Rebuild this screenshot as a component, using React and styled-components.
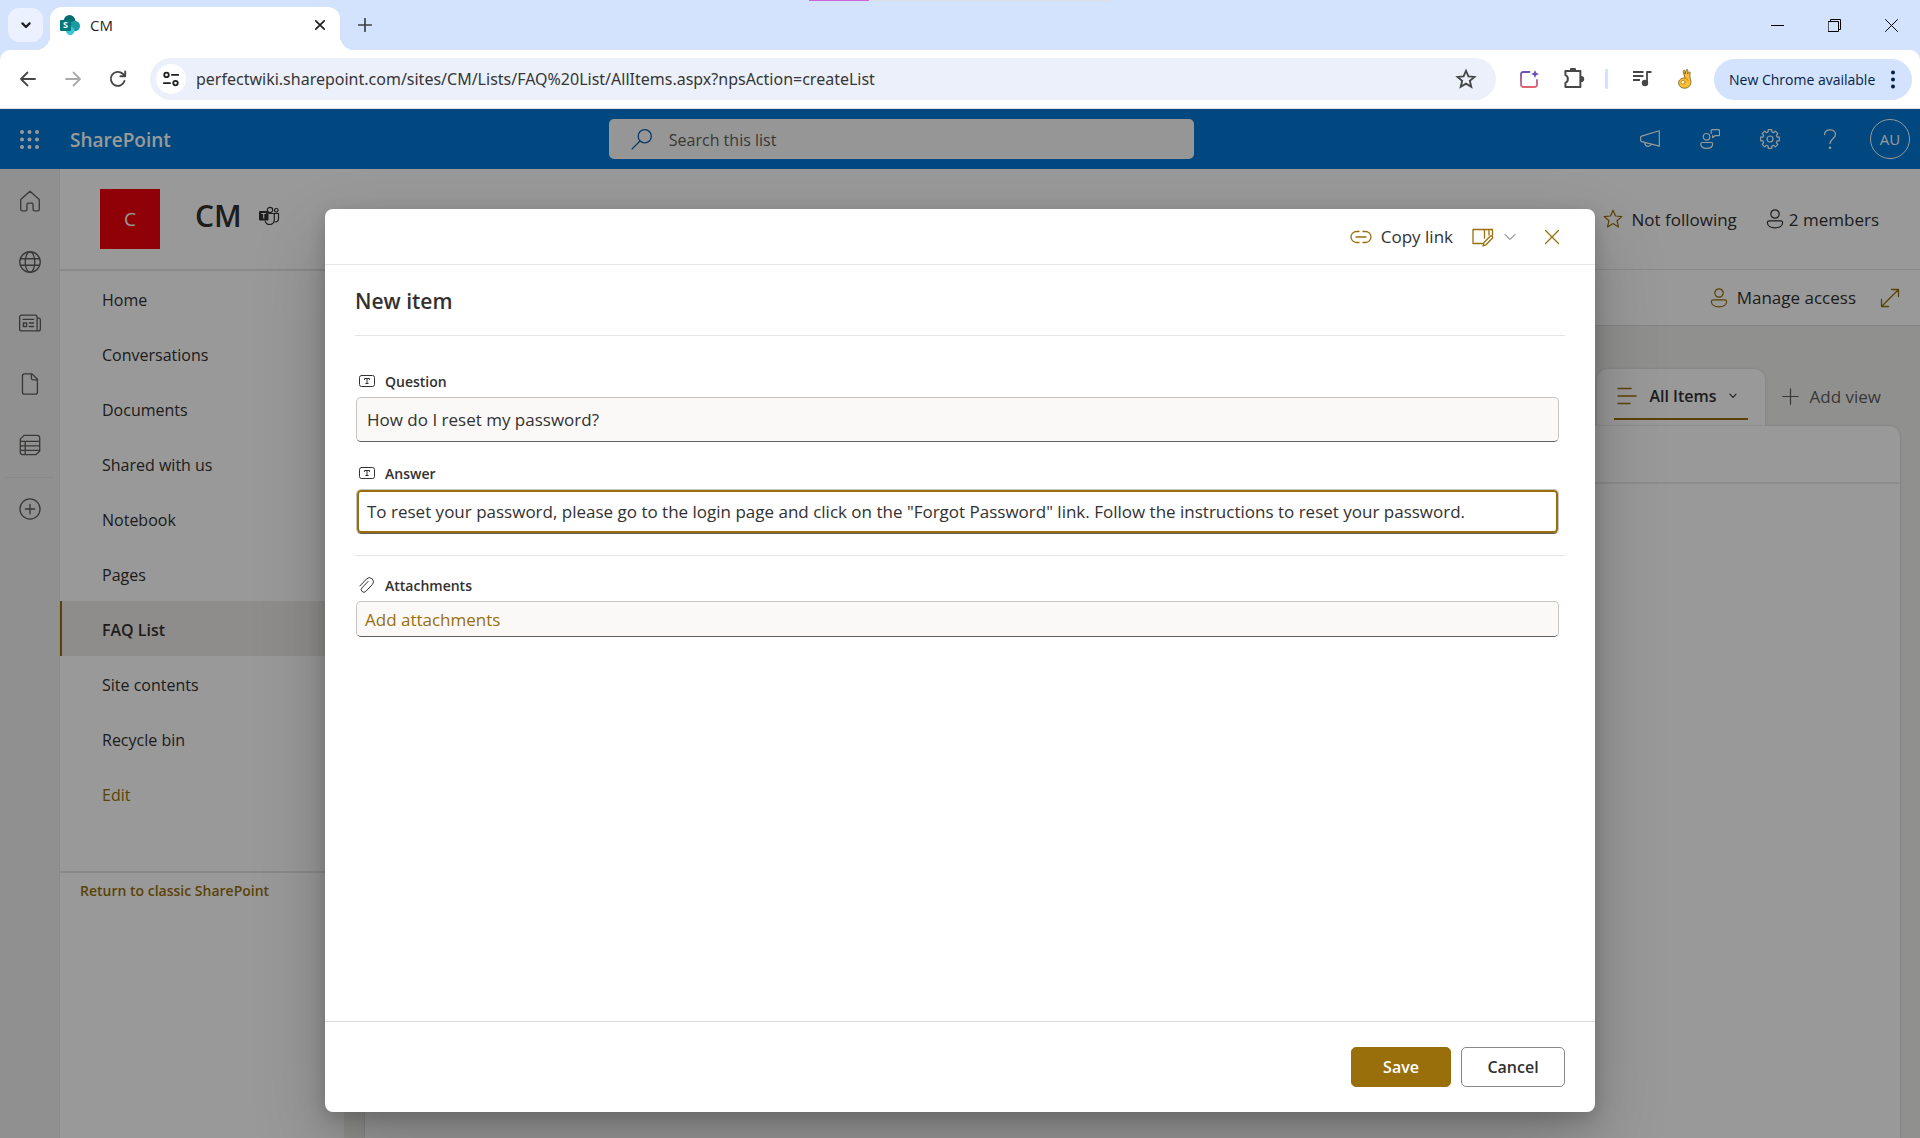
import React, { useState } from "react";
import styled, { createGlobalStyle, css } from "styled-components";

const GOLD = "#986f0b";

const GlobalStyle = createGlobalStyle`
  * {
    box-sizing: border-box;
  }
  body {
    margin: 0;
    font-family: "Open Sans", "Noto Sans", sans-serif;
    font-size: 16px;
    color: #323130;
  }
  button, input {
    font: inherit;
    color: inherit;
  }
  button {
    padding: 0;
    border: 0;
    background: none;
    cursor: pointer;
  }
  a {
    color: inherit;
    text-decoration: none;
  }
`;

const Screen = styled.div`
  display: flex;
  flex-direction: column;
  min-height: 100vh;
`;

const Svg = styled.svg`
  display: block;
  flex: none;
  fill: none;
  stroke: currentColor;
  stroke-width: ${({ $weight }) => $weight || 1.3};
  stroke-linecap: round;
  stroke-linejoin: round;
`;

const Icon = ({ size = 20, width, height, weight, box, children }) => (
  <Svg
    width={width || size}
    height={height || size}
    viewBox={box || "0 0 20 20"}
    $weight={weight}
    aria-hidden="true"
  >
    {children}
  </Svg>
);

/* ---------- browser window ---------- */

const TabStrip = styled.div`
  position: relative;
  display: flex;
  align-items: center;
  height: 50px;
  padding-left: 8px;
  background: #d3e2fd;
`;

const LoadingLine = styled.div`
  position: absolute;
  top: 0;
  left: 809px;
  width: 301px;
  height: 1px;
  background: linear-gradient(to right, #cf63d8 60px, #dfdfe3 60px);
`;

const TabMenu = styled.button`
  display: flex;
  align-items: center;
  justify-content: center;
  width: 35px;
  height: 34px;
  margin-right: 7px;
  border-radius: 11px;
  background: #ebf1fe;
  color: #1f1f1f;
`;

const BrowserTab = styled.div`
  position: relative;
  display: flex;
  align-items: center;
  align-self: flex-end;
  gap: 10px;
  width: 290px;
  height: 43px;
  padding: 0 13px 7px 10px;
  border-radius: 12px 12px 0 0;
  background: #fff;
  font-size: 15px;
  color: #1f1f1f;

  &::before,
  &::after {
    content: "";
    position: absolute;
    bottom: 0;
    width: 14px;
    height: 14px;
  }
  &::before {
    left: -14px;
    background: radial-gradient(circle at 0 0, transparent 14px, #fff 14px);
  }
  &::after {
    right: -14px;
    background: radial-gradient(circle at 100% 0, transparent 14px, #fff 14px);
  }
`;

const TabName = styled.span`
  flex: 1;
`;

const NewTab = styled.button`
  margin-left: 18px;
  color: #3c4043;
`;

const WindowButtons = styled.div`
  display: flex;
  margin-left: auto;
`;

const WindowButton = styled.button`
  display: flex;
  align-items: center;
  justify-content: center;
  width: 57px;
  height: 50px;
  color: #000;
`;

const ToolbarBack = styled.div`
  background: #d3e2fd;
  border-bottom: 1px solid #dcdfe3;
`;

const Toolbar = styled.div`
  display: flex;
  align-items: center;
  height: 58px;
  padding: 0 8px 0 18px;
  border-radius: 10px 10px 0 0;
  background: #fff;
  color: #474747;
`;

const NavButtons = styled.div`
  display: flex;
  gap: 25px;
  margin-right: 22px;
`;

const ToolButton = styled.button`
  color: ${({ disabled }) => (disabled ? "#ababab" : "#474747")};
`;

const AddressBar = styled.div`
  display: flex;
  flex: 1;
  align-items: center;
  gap: 10px;
  height: 42px;
  padding: 0 19px 0 6px;
  border-radius: 21px;
  background: #ebf0fa;
`;

const SiteInfo = styled.button`
  display: flex;
  align-items: center;
  justify-content: center;
  width: 30px;
  height: 30px;
  border-radius: 50%;
  background: #fff;
  color: #1f1f1f;
`;

const Address = styled.input`
  flex: 1;
  padding: 0;
  border: 0;
  outline: 0;
  background: none;
  font-family: "Noto Sans", "Open Sans", sans-serif;
  color: #363636;
`;

const Extensions = styled.div`
  display: flex;
  align-items: center;
  gap: 24px;
  margin: 0 22px 0 23px;
`;

const Separator = styled.span`
  width: 3px;
  height: 20px;
  margin-left: -4px;
  border-radius: 1px;
  background: #d3e2fd;
`;

const UpdateButton = styled.button`
  display: flex;
  align-items: center;
  justify-content: space-between;
  width: 198px;
  height: 41px;
  padding: 0 16px 0 15px;
  border-radius: 21px;
  background: #d3e2fd;
  font-size: 14px;
  color: #041e49;
`;

/* ---------- SharePoint page ---------- */

const Page = styled.div`
  position: relative;
  display: flex;
  flex: 1;
  flex-direction: column;
`;

const SuiteBar = styled.header`
  display: grid;
  grid-template-columns: 14fr 585px 17fr;
  align-items: center;
  height: 60px;
  padding: 0 10px 0 19px;
  background: #0078d4;
  color: #fff;
`;

const Brand = styled.div`
  display: flex;
  align-items: center;
  gap: 30px;
`;

const BrandName = styled.a`
  padding-top: 2px;
  font-size: 19px;
  font-weight: 600;
`;

const SearchBox = styled.label`
  display: flex;
  align-items: center;
  gap: 16px;
  height: 40px;
  padding: 0 22px;
  border-radius: 5px;
  background: #fafafa;
  color: #0f5ea8;
`;

const SearchInput = styled.input`
  flex: 1;
  padding: 2px 0 0;
  border: 0;
  outline: 0;
  background: none;

  &::placeholder {
    color: #605e5c;
    opacity: 1;
  }
`;

const SuiteActions = styled.div`
  display: flex;
  align-items: center;
  justify-content: flex-end;
  gap: 40px;
`;

const Avatar = styled.button`
  width: 40px;
  height: 40px;
  margin-left: -10px;
  border: 1px solid #fff;
  border-radius: 50%;
  font-size: 15px;
`;

const Body = styled.div`
  display: flex;
  flex: 1;
`;

const Rail = styled.nav`
  display: flex;
  flex-direction: column;
  align-items: center;
  width: 60px;
  padding-top: 20px;
  border-right: 1px solid #e8e8e8;
  background: #f0f0f0;
  color: #605e5c;
`;

const RailLink = styled.a`
  padding: 0 0 37px;

  &:last-child {
    padding-top: 19px;
  }
`;

const RailDivider = styled.hr`
  width: 49px;
  margin: -17px 0 0;
  border: 0;
  border-top: 1px solid #e4e4e4;
`;

const Site = styled.div`
  display: flex;
  flex: 1;
  flex-direction: column;
  background: #fff;
`;

const SiteHeader = styled.div`
  display: flex;
  align-items: center;
  height: 101px;
  padding: 0 41px 0 40px;
  border-bottom: 1px solid #e6e6e6;
`;

const SiteLogo = styled.a`
  display: flex;
  align-items: center;
  justify-content: center;
  width: 60px;
  height: 60px;
  margin-right: 35px;
  background: #ee000c;
  font-size: 19px;
  color: #fff;
`;

const SiteTitle = styled.div`
  display: flex;
  align-items: center;
  gap: 16px;
  padding-bottom: 7px;
`;

const SiteName = styled.h1`
  margin: 0;
  font-size: 30px;
  font-weight: 600;
  line-height: 40px;
`;

const SiteMeta = styled.div`
  display: flex;
  align-items: center;
  gap: 28px;
  margin-left: auto;
`;

const MetaButton = styled.button`
  display: flex;
  align-items: center;
  gap: ${({ $gap }) => $gap}px;
  font-size: 17px;
`;

const Gold = styled.span`
  display: flex;
  color: ${GOLD};
`;

const Columns = styled.div`
  display: flex;
  flex: 1;
`;

const SideNav = styled.nav`
  width: 284px;
  border-top: 1px solid #e6e6e6;
`;

const NavList = styled.ul`
  margin: 0;
  padding: 0 0 50px;
  border-bottom: 2px solid #e4e4e4;
  list-style: none;
`;

const NavLink = styled.a`
  display: flex;
  align-items: center;
  height: 55px;
  padding: 2px 0 0 42px;
  ${({ $edit }) => $edit && css`color: ${GOLD};`}
  ${({ $selected }) =>
    $selected &&
    css`
      padding-left: 40px;
      border-left: 2px solid ${GOLD};
      background: #edebe9;
      font-weight: 600;
    `}
`;

const ClassicLink = styled.a`
  display: block;
  padding: 8px 20px;
  font-size: 14px;
  font-weight: 600;
  line-height: 20px;
  color: ${GOLD};
`;

const Content = styled.main`
  display: flex;
  flex: 1;
  flex-direction: column;
  background: #f1f0ef;
`;

const CommandBar = styled.div`
  display: flex;
  align-items: center;
  justify-content: flex-end;
  gap: 24px;
  height: 56px;
  padding: 0 20px 0 0;
  border-bottom: 1px solid #dcdcdc;
  background: #fff;
`;

const Views = styled.div`
  display: flex;
  justify-content: flex-end;
  height: 100px;
  padding: 43px 39px 0 0;
`;

const ViewTab = styled.button`
  display: flex;
  align-items: center;
  height: 57px;
  padding: 0 17px;
  border-radius: 10px 10px 0 0;
  background: #fff;
  box-shadow: 0 0 3px rgba(0, 0, 0, 0.12);
`;

const ViewTabInner = styled.span`
  display: flex;
  align-items: center;
  gap: 12px;
  height: 45px;
  padding: 0 11px 2px 3px;
  border-bottom: 2px solid ${GOLD};
  font-weight: 600;
`;

const AddView = styled.button`
  display: flex;
  align-items: center;
  gap: 11px;
  height: 54px;
  padding-left: 17px;
  font-size: 17px;
  color: #605e5c;
`;

const ListCard = styled.div`
  flex: 1;
  margin: 0 20px 0 21px;
  border-radius: 10px 10px 0 0;
  background: #fff;
  box-shadow: 0 0 3px rgba(0, 0, 0, 0.16);
`;

const ListHead = styled.div`
  height: 58px;
  border-bottom: 2px solid #edebe9;
`;

/* ---------- new item dialog ---------- */

const Overlay = styled.div`
  position: absolute;
  inset: 0;
  display: flex;
  padding: 100px 325px 26px;
  background: rgba(0, 0, 0, 0.4);
`;

const Dialog = styled.form`
  display: flex;
  flex: 1;
  flex-direction: column;
  border-radius: 8px;
  background: #fff;
  box-shadow: 0 32px 72px rgba(0, 0, 0, 0.22), 0 6px 18px rgba(0, 0, 0, 0.18);
`;

const DialogBar = styled.div`
  display: flex;
  align-items: center;
  justify-content: flex-end;
  height: 56px;
  padding: 0 35px 0 0;
  border-bottom: 1px solid #e6e6e6;
`;

const BarButton = styled.button`
  display: flex;
  align-items: center;
  gap: 9px;
  margin-left: ${({ $space }) => $space}px;
  font-size: 17px;
`;

const DialogBody = styled.div`
  flex: 1;
  padding: 0 30px;
`;

const DialogTitle = styled.h2`
  margin: 0 0 35px;
  padding: 20px 0 18px;
  border-bottom: 1px solid #e6e6e6;
  font-size: 21px;
  font-weight: 600;
  line-height: 32px;
`;

const Field = styled.div`
  margin-bottom: 21px;
  padding: 0 6px 0 1px;
`;

const FieldLabel = styled.label`
  display: flex;
  align-items: center;
  gap: 8px;
  height: 20px;
  margin-bottom: 6px;
  padding-left: 1px;
  font-size: 14px;
  font-weight: 600;
`;

const fieldFrame = css`
  display: block;
  width: 100%;
  border: 1px solid #c8c6c4;
  border-bottom-color: #605e5c;
  border-radius: 5px;
  background: #faf9f8;
  font-size: 17px;
`;

const TextField = styled.input`
  ${fieldFrame}
  height: 45px;
  padding: 0 10px;
  outline: 0;
  ${({ $active }) =>
    $active &&
    css`
      background: #fff;
      box-shadow: inset 0 0 0 2px ${GOLD};
    `}
`;

const AttachSection = styled.div`
  padding-top: 19px;
  border-top: 1px solid #e6e6e6;
`;

const AttachButton = styled.button`
  ${fieldFrame}
  height: 36px;
  padding: 0 8px;
  text-align: left;
  color: ${GOLD};
`;

const DialogFooter = styled.div`
  display: flex;
  justify-content: flex-end;
  gap: 10px;
  padding: 25px 30px;
  border-top: 1px solid #dcdcdc;
`;

const FooterButton = styled.button`
  width: ${({ $primary }) => ($primary ? 100 : 104)}px;
  height: 40px;
  border: 1px solid ${({ $primary }) => ($primary ? GOLD : "#8a8886")};
  border-radius: 5px;
  background: ${({ $primary }) => ($primary ? GOLD : "#fff")};
  font-weight: 600;
  color: ${({ $primary }) => ($primary ? "#fff" : "#323130")};
`;

/* ---------- icons ---------- */

const PersonIcon = () => (
  <Icon weight={1.2}>
    <circle cx="10" cy="5" r="4.2" />
    <path d="M4.2 11.8h11.6c1 0 1.8.8 1.8 1.7 0 3.4-3.4 5.3-7.6 5.3s-7.6-1.9-7.6-5.3c0-.9.8-1.7 1.8-1.7z" />
  </Icon>
);

const TextIcon = () => (
  <Icon weight={1}>
    <rect x="2.5" y="4.5" width="15" height="11" rx="2" />
    <path d="M7.5 8.5v-1h5v1M10 7.5v5M8.8 12.5h2.4" />
  </Icon>
);

// eight teeth around the hub, each one out and back in
const gearPath = () => {
  const points = [];
  for (let i = 0; i < 8; i++) {
    const middle = (i * Math.PI) / 4;
    [[-0.25, 7.4], [-0.19, 9.5], [0.19, 9.5], [0.25, 7.4]].forEach(([turn, r]) => {
      const x = 10 + r * Math.sin(middle + turn);
      const y = 10 - r * Math.cos(middle + turn);
      points.push(`${x.toFixed(2)} ${y.toFixed(2)}`);
    });
  }
  return `M${points.join("L")}z`;
};

const railIcons = [
  <path key="home" d="M1.500 8.700 10 1l8.500 7.700v8.800c0 .9-.6 1.500-1.500 1.500h-2.800c-.8 0-1.400-.6-1.400-1.400v-4.500c0-.7-.5-1.200-1.200-1.200H8.400c-.7 0-1.200.5-1.200 1.200v4.500c0 .8-.6 1.400-1.400 1.400H3c-.9 0-1.500-.6-1.500-1.500z" />,
  <g key="globe">
    <circle cx="10" cy="10" r="9.400" />
    <ellipse cx="10" cy="10" rx="4.400" ry="9.400" />
    <path d="M1.300 7h17.400M1.300 13h17.400" />
  </g>,
  <g key="news">
    <path d="M16.500 16.500V4.500c0-1-.7-1.700-1.700-1.700H2.200C1.200 2.800.5 3.500.5 4.500v11c0 1 .8 1.800 1.800 1.800h15.200c1.200 0 2-.8 2-2V7c0-.8-.7-1.400-1.500-1.400h-1.200" />
    <path d="M3.700 6.700h9.600M9.300 10h4M9.300 13.200h4M3.900 10h3v3.200h-3z" />
  </g>,
  <path key="file" d="M5 .7h6.800l5 5v11.600c0 1.100-.8 2-1.900 2H5c-1.100 0-1.900-.9-1.900-2V2.700c0-1.100.8-2 1.900-2zM11.300 1v3.700c0 .9.700 1.600 1.600 1.600h3.700" />,
  <path key="list" d="M4.500 1.200h12c1.400 0 2.400 1 2.400 2.300v12l-3.400 3.400H3.400c-1.300 0-2.300-1-2.300-2.300V4.600zM1.100 6.700h17.800M1.100 10.800h17.800M1.100 14.900h17.800M5.600 6.700v12.200" />,
  <g key="add">
    <circle cx="10" cy="10" r="9.200" />
    <path d="M10 5.700v8.600M5.700 10h8.600" />
  </g>,
];
const railNames = ["Home", "My sites", "My news", "My files", "My lists", "Create"];

const navItems = [
  "Home",
  "Conversations",
  "Documents",
  "Shared with us",
  "Notebook",
  "Pages",
  "FAQ List",
  "Site contents",
  "Recycle bin",
  "Edit",
];

const Browser = () => (
  <>
    <TabStrip>
      <LoadingLine />
      <TabMenu aria-label="Search tabs">
        <Icon size={16} weight={2.8}>
          <path d="m5.500 8 4.500 4.500L14.500 8" />
        </Icon>
      </TabMenu>
      <BrowserTab>
        <svg width="20" height="20" viewBox="0 0 20 20" aria-hidden="true">
          <circle cx="9.500" cy="5.800" r="5.800" fill="#036c70" />
          <circle cx="14.700" cy="11" r="5.300" fill="#1a9ba1" />
          <circle cx="10.200" cy="15.800" r="4.200" fill="#37c6d0" />
          <rect y="5" width="11" height="11" rx="1" fill="#03787c" />
          <text x="5.500" y="13.400" textAnchor="middle" fontSize="9" fontWeight="700" fill="#fff">
            S
          </text>
        </svg>
        <TabName>CM</TabName>
        <ToolButton aria-label="Close tab">
          <Icon size={14} weight={2.4}>
            <path d="m4 4 12 12M16 4 4 16" stroke="#1f1f1f" />
          </Icon>
        </ToolButton>
      </BrowserTab>
      <NewTab aria-label="New tab">
        <Icon size={14} weight={2.4}>
          <path d="M10 1v18M1 10h18" />
        </Icon>
      </NewTab>
      <WindowButtons>
        <WindowButton aria-label="Minimize">
          <Icon size={13} box="0 0 13 13" weight={1}>
            <path d="M0 6.500h13" />
          </Icon>
        </WindowButton>
        <WindowButton aria-label="Restore">
          <Icon size={13} box="0 0 13 13" weight={1}>
            <path d="M.5 2.500h10v10H.5zM2.500 2.500v-2h10v10h-2" />
          </Icon>
        </WindowButton>
        <WindowButton aria-label="Close">
          <Icon size={13} box="0 0 13 13" weight={1}>
            <path d="m.5.5 12 12M12.500.5l-12 12" />
          </Icon>
        </WindowButton>
      </WindowButtons>
    </TabStrip>
    <ToolbarBack>
      <Toolbar>
        <NavButtons>
          <ToolButton aria-label="Back">
            <Icon weight={1.8}>
              <path d="M17 10H3M9.500 3.500 3 10l6.500 6.500" />
            </Icon>
          </ToolButton>
          <ToolButton aria-label="Forward" disabled>
            <Icon weight={1.8}>
              <path d="M3 10h14M10.500 3.500 17 10l-6.500 6.500" />
            </Icon>
          </ToolButton>
          <ToolButton aria-label="Reload">
            <Icon weight={1.9}>
              <path d="M16.500 12a7 7 0 1 1-1.800-7.200L17 7M17.200 2.500V7.300h-4.800" />
            </Icon>
          </ToolButton>
        </NavButtons>
        <AddressBar>
          <SiteInfo aria-label="Site information">
            <Icon size={18} weight={2}>
              <circle cx="5" cy="5.500" r="2.500" />
              <path d="M11 5.500h7M2 14.500h7" />
              <circle cx="15" cy="14.500" r="2.500" />
            </Icon>
          </SiteInfo>
          <Address
            aria-label="Address"
            defaultValue="perfectwiki.sharepoint.com/sites/CM/Lists/FAQ%20List/AllItems.aspx?npsAction=createList"
          />
          <ToolButton aria-label="Bookmark">
            <Icon size={22} weight={1.7}>
              <path d="m10 2.500 2.200 5.100 5.500.5-4.200 3.600 1.300 5.400-4.800-2.900-4.800 2.900 1.300-5.400-4.200-3.600 5.500-.5z" strokeLinejoin="miter" />
            </Icon>
          </ToolButton>
        </AddressBar>
        <Extensions>
          <ToolButton aria-label="Screen capture">
            <Icon weight={1.8}>
              <defs>
                <linearGradient id="capture" x1="0" y1="0" x2="0" y2="1">
                  <stop offset="0" stopColor="#6a51b8" />
                  <stop offset="1" stopColor="#e0656f" />
                </linearGradient>
              </defs>
              <path d="M10.500 3H4.500A2.500 2.500 0 0 0 2 5.500v10A2.500 2.500 0 0 0 4.500 18h11a2.500 2.500 0 0 0 2.500-2.500V11" stroke="url(#capture)" />
              <path d="m16 1 1.200 2.800L20 5l-2.800 1.200L16 9l-1.200-2.800L12 5l2.800-1.200z" fill="#6a51b8" stroke="none" />
            </Icon>
          </ToolButton>
          <ToolButton aria-label="Extensions">
            <Icon size={22} weight={1.8}>
              <path d="M2.200 2.700h13.600v14.600H2.200v-3.800c1.400-.5 2.200-1.800 2.200-3.500S3.600 7 2.200 6.500z" />
              <path d="M7.200 2a1.900 1.900 0 0 1 3.800 0zM16.500 8.100a1.900 1.900 0 0 1 0 3.800z" fill="currentColor" />
            </Icon>
          </ToolButton>
          <Separator />
          <ToolButton aria-label="Media">
            <Icon width={22} height={20} box="0 0 22 20" weight={1.8}>
              <path d="M1 3h10.500M1 7h10.500M1 11h7M15 14V3h4.500" strokeLinecap="butt" />
              <circle cx="13" cy="14" r="2.300" fill="currentColor" />
            </Icon>
          </ToolButton>
          <ToolButton aria-label="Profile">
            <Icon width={14} height={20} box="0 0 14 20" weight={0.8}>
              <path
                d="M5.300 1.900c.7-1 1.800-.6 1.800.4l-.1 2.800L8.300 1c.3-.9 1.600-.7 1.600.3L9.600 5l1.200-1.700c.6-.8 1.600-.3 1.400.6-.7 2.600-.3 4.600.5 7 1.200 4.600-1.600 8.300-6 8.300-3.600 0-6.100-2.300-6.100-5.300S3 8.900 6.600 9z"
                fill="#fcbf2e"
                stroke="#6b5a3a"
              />
              <ellipse cx="5" cy="13.200" rx="2" ry="1.800" fill="#fff" stroke="#b07a18" />
              <path d="M6.800 9.200c1.600 0 2.800 1 3.200 2.400" stroke="#b07a18" />
            </Icon>
          </ToolButton>
        </Extensions>
        <UpdateButton>
          New Chrome available
          <Icon width={6} height={20} box="0 0 6 20">
            <g fill="currentColor" stroke="none">
              <circle cx="3" cy="3.500" r="2" />
              <circle cx="3" cy="10.500" r="2" />
              <circle cx="3" cy="17.500" r="2" />
            </g>
          </Icon>
        </UpdateButton>
      </Toolbar>
    </ToolbarBack>
  </>
);

const Header = () => (
  <SuiteBar>
    <Brand>
      <button aria-label="App launcher">
        <Icon size={21} box="0 0 21 21">
          <g fill="currentColor" stroke="none">
            {[3, 10.5, 18].map((y) =>
              [3, 10.5, 18].map((x) => <circle key={`${x}-${y}`} cx={x} cy={y} r="2" />)
            )}
          </g>
        </Icon>
      </button>
      <BrandName href="#">SharePoint</BrandName>
    </Brand>
    <SearchBox>
      <Icon size={22} weight={1.2}>
        <circle cx="12.500" cy="7.500" r="6" />
        <path d="M8.200 11.800 1 19" />
      </Icon>
      <SearchInput aria-label="Search this list" placeholder="Search this list" />
    </SearchBox>
    <SuiteActions>
      <button aria-label="What's new">
        <Icon weight={1.2}>
          <path d="M19.300 1.800v15.400L1.800 12.600c-.8-.2-1.200-.7-1.200-1.400V8.400c0-.6.400-1.100 1-1.300zM4.500 13.300c.3 2 1.600 4 3.500 4s2.800-1.100 3.200-2.200" />
        </Icon>
      </button>
      <button aria-label="Feedback">
        <Icon weight={1.2}>
          <circle cx="6.500" cy="7.800" r="3.300" />
          <path d="M2 13.500h9.500c.7 0 1.200.5 1.200 1.200 0 3-2.500 4.700-6 4.700s-5.900-1.700-5.900-4.700c0-.7.500-1.200 1.200-1.200zM11.200 4.500V1.700c0-.6.400-1 1-1h6.300c.6 0 1 .4 1 1v4c0 .6-.4 1-1 1H15l-2.400 2V6.700" />
        </Icon>
      </button>
      <button aria-label="Settings">
        <Icon weight={1.2}>
          <circle cx="10" cy="10" r="3" />
          <path d={gearPath()} />
        </Icon>
      </button>
      <button aria-label="Help">
        <Icon weight={1.3}>
          <path d="M4.500 5.500C4.800 2.500 7 .8 10 .8s5.500 1.800 5.500 4.800c0 4-5.500 4.600-5.500 9" />
          <circle cx="10" cy="18.800" r=".6" fill="currentColor" />
        </Icon>
      </button>
      <Avatar>AU</Avatar>
    </SuiteActions>
  </SuiteBar>
);

const SitePage = () => (
  <Body>
    <Rail>
      {railIcons.map((icon, i) => (
        <React.Fragment key={railNames[i]}>
          {i === 5 && <RailDivider />}
          <RailLink href="#" aria-label={railNames[i]}>
            <Icon size={24} box="-1 -1 22 22" weight={1.2}>
              {icon}
            </Icon>
          </RailLink>
        </React.Fragment>
      ))}
    </Rail>
    <Site>
      <SiteHeader>
        <SiteLogo href="#">C</SiteLogo>
        <SiteTitle>
          <SiteName>CM</SiteName>
          <Icon width={22} height={20} box="0 0 22 20" weight={1.2}>
            <circle cx="12" cy="4" r="2.700" />
            <circle cx="18.300" cy="4.300" r="1.800" />
            <path d="M11 7.500h9.500v5c0 2.200-1.500 3.500-3.500 3.500M16.300 7.500v6c0 3-2 5-4.500 5s-4-1.500-4.500-3.200" />
            <rect x="1" y="5" width="9.500" height="9.500" rx="1" fill="currentColor" stroke="none" />
            <path d="M3.700 7.500h4M5.700 7.500v4.500" stroke="#fff" />
          </Icon>
        </SiteTitle>
        <SiteMeta>
          <MetaButton $gap={8}>
            <Gold>
              <Icon weight={1.2}>
                <path d="m10 1.200 2.500 5.800 6.300.6-4.800 4.100 1.500 6.200L10 14.600l-5.500 3.300L6 11.700 1.200 7.600l6.300-.6z" />
              </Icon>
            </Gold>
            Not following
          </MetaButton>
          <MetaButton $gap={4}>
            <PersonIcon />2 members
          </MetaButton>
        </SiteMeta>
      </SiteHeader>
      <Columns>
        <SideNav>
          <NavList>
            {navItems.map((item) => (
              <li key={item}>
                <NavLink href="#" $selected={item === "FAQ List"} $edit={item === "Edit"}>
                  {item}
                </NavLink>
              </li>
            ))}
          </NavList>
          <ClassicLink href="#">Return to classic SharePoint</ClassicLink>
        </SideNav>
        <Content>
          <CommandBar>
            <MetaButton $gap={8}>
              <Gold>
                <PersonIcon />
              </Gold>
              Manage access
            </MetaButton>
            <button aria-label="Expand">
              <Gold>
                <Icon weight={1.3}>
                  <path d="M1.500 18.500 18.500 1.500M11.500 1.500h7v7M1.500 11.500v7h7" />
                </Icon>
              </Gold>
            </button>
          </CommandBar>
          <Views>
            <ViewTab>
              <ViewTabInner>
                <Gold>
                  <Icon weight={1.6}>
                    <path d="M1 2.500h13M1 10h18M1 17.500h12" />
                  </Icon>
                </Gold>
                All Items
                <Icon size={8} box="0 0 8 8" weight={1.1}>
                  <path d="M.9 2.200 4 5.300l3.100-3.100" />
                </Icon>
              </ViewTabInner>
            </ViewTab>
            <AddView>
              <Icon size={17} weight={1.4}>
                <path d="M10 1v18M1 10h18" />
              </Icon>
              Add view
            </AddView>
          </Views>
          <ListCard>
            <ListHead />
          </ListCard>
        </Content>
      </Columns>
    </Site>
  </Body>
);

const NewItemDialog = () => {
  const [question, setQuestion] = useState("How do I reset my password?");
  const [answer, setAnswer] = useState(
    'To reset your password, please go to the login page and click on the "Forgot Password" link. Follow the instructions to reset your password.'
  );

  return (
    <Overlay>
      <Dialog role="dialog" aria-labelledby="dialog-title" onSubmit={(e) => e.preventDefault()}>
        <DialogBar>
          <BarButton type="button">
            <Gold>
              <Icon width={22} height={14} box="0 0 22 14" weight={1.3}>
                <path d="M9 1.500H6.500a5.500 5.500 0 0 0 0 11H9M13 1.500h2.500a5.500 5.500 0 0 1 0 11H13M6 7h10" />
              </Icon>
            </Gold>
            Copy link
          </BarButton>
          <BarButton type="button" $space={19} aria-label="Edit form">
            <Gold>
              <Icon width={22} height={20} box="0 0 22 20" weight={1.3}>
                <path d="M10.500 16.500H1v-14h11.500v8.500M12.500 2.500h8v5.500M17 2.500v5.500" />
                <path d="m11 19 1-3.500 6.500-6.500c.9-.9 2.900.9 2 2L14 17.800z" />
              </Icon>
            </Gold>
            <Icon size={14} box="0 0 14 14" weight={1}>
              <path d="m2 4.500 5 5 5-5" stroke="#605e5c" />
            </Icon>
          </BarButton>
          <BarButton type="button" $space={27} aria-label="Close">
            <Gold>
              <Icon size={16} box="0 0 16 16" weight={1.3}>
                <path d="m1.500 1.500 13 13M14.500 1.500l-13 13" />
              </Icon>
            </Gold>
          </BarButton>
        </DialogBar>
        <DialogBody>
          <DialogTitle id="dialog-title">New item</DialogTitle>
          <Field>
            <FieldLabel htmlFor="question">
              <TextIcon />
              Question
            </FieldLabel>
            <TextField id="question" value={question} onChange={(e) => setQuestion(e.target.value)} />
          </Field>
          <Field>
            <FieldLabel htmlFor="answer">
              <TextIcon />
              Answer
            </FieldLabel>
            <TextField id="answer" $active value={answer} onChange={(e) => setAnswer(e.target.value)} />
          </Field>
          <AttachSection>
            <Field>
              <FieldLabel htmlFor="attachments">
                <Icon weight={1}>
                  <path d="m2.800 11 6.700-7a4 4 0 0 1 5.800 5.600l-6.500 6.800a2.600 2.600 0 0 1-3.800-3.600l6.200-6.500" />
                </Icon>
                Attachments
              </FieldLabel>
              <AttachButton type="button" id="attachments">
                Add attachments
              </AttachButton>
            </Field>
          </AttachSection>
        </DialogBody>
        <DialogFooter>
          <FooterButton type="submit" $primary>
            Save
          </FooterButton>
          <FooterButton type="button">Cancel</FooterButton>
        </DialogFooter>
      </Dialog>
    </Overlay>
  );
};

const App = () => (
  <Screen>
    <GlobalStyle />
    <Browser />
    <Page>
      <Header />
      <SitePage />
      <NewItemDialog />
    </Page>
  </Screen>
);

export default App;
